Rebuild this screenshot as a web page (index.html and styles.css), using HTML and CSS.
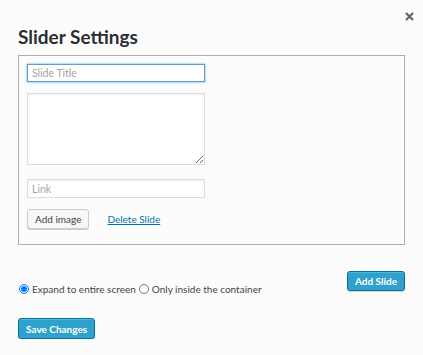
FILE: index.html
```html
<!DOCTYPE html>
<html>
<head>
    <meta charset="utf-8">
    <title>Slider Settings</title>
<link rel="stylesheet" href="styles.css">
</head>
<body>
<div class="modal">
    <div class="modal-head">
        <h1>Slider Settings</h1>
        <svg class="close" width="9" height="9" viewBox="0 0 9 9"><path d="M1 1L8 8M8 1L1 8" stroke="#666" stroke-width="2.2"/></svg>
    </div>
    <div class="slide-box">
        <input class="field focus" type="text" placeholder="Slide Title">
        <textarea class="field area"></textarea>
        <input class="field" type="text" placeholder="Link">
        <div class="slide-actions">
            <button class="btn">Add image</button>
            <a href="#" class="del-link">Delete Slide</a>
        </div>
    </div>
    <div class="options-row">
        <div class="radios">
            <label><input type="radio" name="mode" checked> Expand to entire screen</label>
            <label><input type="radio" name="mode"> Only inside the container</label>
        </div>
        <button class="btn btn-primary">Add Slide</button>
    </div>
    <button class="btn btn-primary save">Save Changes</button>
</div>
</body>
</html>
```

FILE: styles.css
```css
* {
    margin: 0;
    padding: 0;
    box-sizing: border-box;
}
body {
    background: #fcfcfc;
    font-family: Lato, "Liberation Sans", sans-serif;
    font-size: 10px;
    color: #444;
}
.modal {
    padding: 12px 18px 0 18px;
}
.modal-head {
    display: flex;
    justify-content: space-between;
    align-items: flex-start;
    margin-right: -9px;
}
.modal-head h1 {
    margin-top: 13px;
    font-size: 19px;
    font-weight: 700;
    line-height: 24px;
    color: #2b2e33;
}
.close {
    display: block;
}
.slide-box {
    margin-top: 6px;
    border: 1px solid #adadad;
    padding: 8px 8px 16px 8px;
    height: 190px;
}
.field {
    display: block;
    width: 178px;
    height: 19px;
    border: 1px solid #ddd;
    background: #fff;
    font-family: Lato, "Liberation Sans", sans-serif;
    font-size: 10.5px;
    padding: 0 4px;
    color: #333;
    box-shadow: inset 0 1px 2px rgba(0,0,0,0.07);
}
.field::placeholder {
    color: #a4a4a4;
}
.field.focus {
    height: 18px;
    border-color: #5b9dd9;
    box-shadow: 0 0 2px rgba(30,140,190,0.8);
}
.area {
    margin-top: 11px;
    height: 72px;
    resize: vertical;
}
.area + .field {
    margin-top: 14px;
}
.slide-actions {
    margin-top: 11px;
    display: flex;
    align-items: center;
    gap: 18px;
}
.btn {
    font-family: Lato, "Liberation Sans", sans-serif;
    font-size: 10px;
    height: 20px;
    padding: 0 7px;
    border: 1px solid #ccc;
    border-radius: 3px;
    background: #f7f7f7;
    color: #444;
    box-shadow: 0 1px 0 #ccc;
}
.del-link {
    color: #0073aa;
    font-size: 10px;
}
.options-row {
    margin-top: 26px;
    display: flex;
    justify-content: space-between;
    align-items: flex-start;
}
.radios {
    margin-top: 12px;
    display: flex;
    gap: 2px;
    color: #444;
}
.radios label {
    display: flex;
    align-items: center;
}
.radios input {
    width: 10px;
    height: 10px;
    margin: 0 3px 0 1px;
}
.btn-primary {
    background: #2ea2cc;
    border-color: #0074a2;
    color: #fff;
    font-weight: 700;
    box-shadow: inset 0 1px 0 rgba(120,200,230,0.5), 0 1px 0 rgba(0,0,0,0.15);
}
.save {
    margin-top: 23px;
    height: 21px;
}
```
